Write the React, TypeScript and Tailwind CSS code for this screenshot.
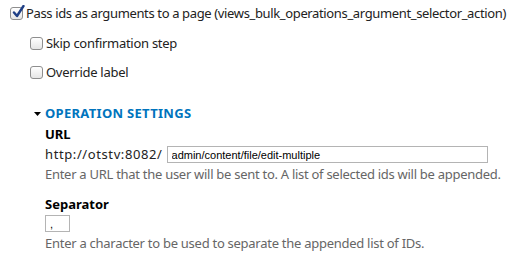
import React from 'react';

const CheckBox: React.FC<{ checked?: boolean }> = ({ checked }) => (
  <span className="relative inline-flex w-[13px] h-[13px] shrink-0 rounded-[3px] border border-[#8e8e8e] bg-gradient-to-b from-white to-[#e6e6e6]">
    {checked && (
      <svg className="absolute -top-[3px] left-[1px]" width="13" height="14" viewBox="0 0 13 14">
        <path d="M2 7.5 L5 11 L11.5 1" fill="none" stroke="#1f3f86" strokeWidth="2.4" strokeLinecap="round" strokeLinejoin="round" />
      </svg>
    )}
  </span>
);

export default function App() {
  return (
    <div className="w-[528px] h-[262px] bg-white text-[13px] leading-[15px] text-[#222] font-['Noto_Sans',sans-serif] pt-[6px]">
      <label className="flex items-center gap-[3px] pl-[10px] h-[15px]">
        <CheckBox checked />
        <span className="whitespace-nowrap tracking-[-0.36px]">Pass ids as arguments to a page (views_bulk_operations_argument_selector_action)</span>
      </label>

      <div className="pl-[30px] mt-[15px] flex flex-col gap-[14px]">
        <label className="flex items-center gap-[3px] h-[15px]">
          <CheckBox />
          <span className="tracking-[-0.28px]">Skip confirmation step</span>
        </label>
        <label className="flex items-center gap-[3px] h-[15px]">
          <CheckBox />
          <span className="tracking-[-0.28px]">Override label</span>
        </label>
      </div>

      <div className="pl-[34px] mt-[26px]">
        <div className="flex items-center gap-[4px] h-[15px]">
          <svg width="7" height="4" viewBox="0 0 7 4">
            <path d="M0 0 H7 L3.5 4 Z" fill="#000" />
          </svg>
          <span className="font-bold text-[#0074bd] uppercase tracking-[0.3px]">Operation settings</span>
        </div>
        <div className="pl-[11px]">
          <div className="font-bold mt-[6px] h-[15px] text-black">URL</div>
          <div className="flex items-center gap-[4px] mt-[4px] h-[17px]">
            <span className="tracking-[0.6px]">http://otstv:8082/</span>
            <input
              readOnly
              value="admin/content/file/edit-multiple"
              className="w-[321px] h-[17px] border border-[#b4b4b4] px-[4px] text-[11px] font-['Liberation_Sans',sans-serif] text-black outline-none"
            />
          </div>
          <div className="text-[#666] mt-[4px] h-[15px] whitespace-nowrap tracking-[-0.28px]">Enter a URL that the user will be sent to. A list of selected ids will be appended.</div>
          <div className="font-bold mt-[15px] h-[15px] text-black">Separator</div>
          <input
            readOnly
            value=","
            className="block w-[25px] h-[17px] mt-[3px] border border-[#b4b4b4] px-[4px] text-[11px] font-['Liberation_Sans',sans-serif] text-black outline-none"
          />
          <div className="text-[#666] mt-[4px] h-[15px] whitespace-nowrap tracking-[-0.27px]">Enter a character to be used to separate the appended list of IDs.</div>
        </div>
      </div>
    </div>
  );
}
